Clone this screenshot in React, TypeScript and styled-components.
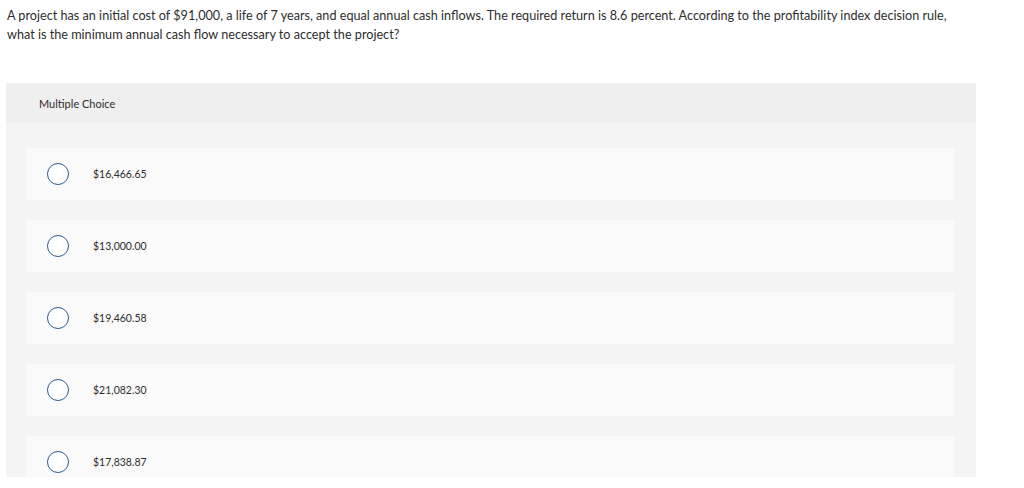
import React from 'react';
import styled, { createGlobalStyle } from 'styled-components';

const GlobalStyle = createGlobalStyle`
  body {
    margin: 0;
    background: #ffffff;
    font-family: Lato, "Open Sans", Arial, sans-serif;
    color: #333333;
  }
`;

const Page = styled.div`
  padding: 6px 0 0 6px;
  width: 970px;
`;

const Question = styled.p`
  margin: 0 0 0 1px;
  font-size: 12.65px;
  line-height: 19px;
  color: #2d2d2d;
`;

const Panel = styled.div`
  margin-top: 39px;
  height: 394px;
  overflow: hidden;
  background: #f4f4f4;
`;

const PanelHeader = styled.div`
  height: 40px;
  display: flex;
  align-items: center;
  padding-left: 33px;
  background: #efefef;
  font-size: 11px;
  color: #2d2d2d;
`;

const Options = styled.div`
  display: flex;
  flex-direction: column;
  gap: 20px;
  padding: 25px 22px 0 20px;
`;

const Option = styled.label`
  height: 52px;
  flex-shrink: 0;
  display: flex;
  align-items: center;
  padding-left: 21px;
  background: #fafafa;
  border-radius: 2px;
  font-size: 10.5px;
  color: #2d2d2d;
  cursor: pointer;
`;

const Radio = styled.span`
  width: 20px;
  height: 20px;
  border: 1px solid #2f5c92;
  border-radius: 50%;
  background: #ffffff;
  margin-right: 24px;
  flex-shrink: 0;
`;

const choices = ['$16,466.65', '$13,000.00', '$19,460.58', '$21,082.30', '$17,838.87'];

const App: React.FC = () => {
  return (
    <>
      <GlobalStyle />
      <Page>
        <Question>
          A project has an initial cost of $91,000, a life of 7 years, and equal annual cash inflows. The required return is 8.6 percent. According to the profitability index decision rule,
          <br />
          what is the minimum annual cash flow necessary to accept the project?
        </Question>

        <Panel>
          <PanelHeader>Multiple Choice</PanelHeader>
          <Options>
            {choices.map((c) => (
              <Option key={c}>
                <Radio />
                {c}
              </Option>
            ))}
          </Options>
        </Panel>
      </Page>
    </>
  );
};

export default App;
